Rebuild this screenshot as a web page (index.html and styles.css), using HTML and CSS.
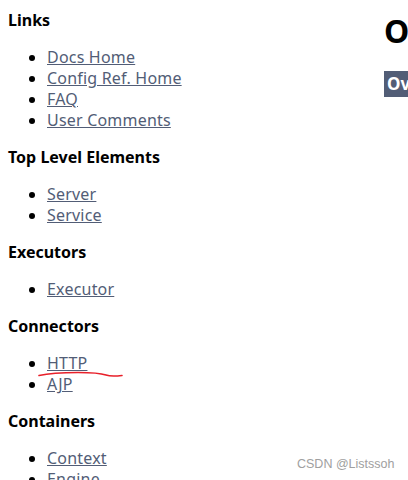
FILE: index.html
```html
<!DOCTYPE html>
<html>
<head>
<meta charset="utf-8">
<link rel="stylesheet" href="styles.css">
</head>
<body>
<div class="page">
  <nav class="side">
    <h2 class="sec">Links</h2>
    <ul class="list">
      <li><a href="#">Docs Home</a></li>
      <li><a href="#">Config Ref. Home</a></li>
      <li><a href="#">FAQ</a></li>
      <li><a href="#">User Comments</a></li>
    </ul>
    <h2 class="sec">Top Level Elements</h2>
    <ul class="list">
      <li><a href="#">Server</a></li>
      <li><a href="#">Service</a></li>
    </ul>
    <h2 class="sec">Executors</h2>
    <ul class="list">
      <li><a href="#">Executor</a></li>
    </ul>
    <h2 class="sec">Connectors</h2>
    <ul class="list">
      <li><a href="#">HTTP</a></li>
      <li><a href="#">AJP</a></li>
    </ul>
    <h2 class="sec">Containers</h2>
    <ul class="list">
      <li><a href="#">Context</a></li>
      <li><a href="#">Engine</a></li>
    </ul>
  </nav>
  <main class="main">
    <h1 class="title">Overview</h1>
    <h3 class="bar">Overview</h3>
  </main>
</div>
<svg class="scribble" width="86" height="12" viewBox="0 0 86 12"><path d="M1 7.5 C 10 5.5, 20 4.5, 40 4.5 C 55 4.5, 62 5, 68 7 C 72 8.5, 78 8.2, 84 7.5" fill="none" stroke="#e8202a" stroke-width="1.6" stroke-linecap="round"/></svg>
<div class="watermark">CSDN @Listssoh</div>
</body>
</html>
```
FILE: styles.css
```css
html, body {
  margin: 0;
  padding: 0;
  background: #fff;
  overflow: hidden;
}
body {
  position: relative;
  width: 408px;
  height: 480px;
  font-family: "Noto Sans", "Open Sans", sans-serif;
  color: #000;
}
.page {
  display: flex;
  padding: 0 0 0 8px;
}
.side {
  width: 376px;
  flex: none;
}
.sec {
  font-size: 16px;
  font-weight: bold;
  margin: 9px 0 0;
  line-height: 22px;
}
.list {
  margin: 16px 0 15px;
  padding: 0 0 0 39px;
  list-style: disc;
  font-size: 16px;
  line-height: 21px;
}
.list a {
  color: #525d76;
  text-decoration: underline;
  letter-spacing: 0.2px;
}
.scribble {
  position: absolute;
  left: 38px;
  top: 368px;
}
.main {
  flex: none;
  width: 200px;
}
.title {
  font-size: 32px;
  font-weight: bold;
  margin: 11px 0 0;
  line-height: 40px;
}
.bar {
  margin: 20px 0 0;
  background: #525d76;
  color: #fff;
  font-size: 17px;
  font-weight: bold;
  line-height: 26px;
  padding: 0 3px;
}
.watermark {
  position: absolute;
  left: 297px;
  top: 457px;
  font-family: "Liberation Sans", sans-serif;
  font-size: 12.5px;
  color: #a0a0a0;
}
```
